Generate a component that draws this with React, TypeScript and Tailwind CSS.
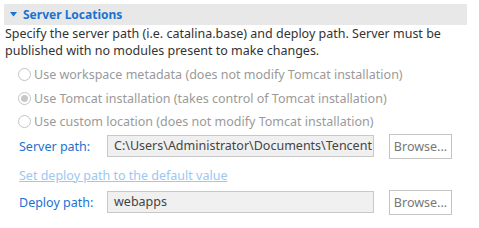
import React from "react";

const Radio = ({ checked, label }: { checked?: boolean; label: string }) => (
  <div className="flex h-[23.5px] items-center">
    <span className="flex h-[13px] w-[13px] items-center justify-center rounded-full border border-[#c4c4c4] bg-white">
      {checked && <span className="h-[7px] w-[7px] rounded-full bg-[#c8c8c8]" />}
    </span>
    <span className="ml-[3px] text-[#9a9a9a]">{label}</span>
  </div>
);

const PathRow = ({ label, value }: { label: string; value: string }) => (
  <div className="flex items-center">
    <span className="w-[88px] text-[#1a73d0]">{label}</span>
    <div className="h-[22px] w-[267px] overflow-hidden whitespace-nowrap border border-[#c8c8c8] bg-[#f0f0f0] pl-[6px] leading-[20px] text-[#444]">
      {value}
    </div>
    <button className="ml-[15px] h-[25px] w-[63px] border border-[#c4c4c4] bg-white text-[#777]">Browse...</button>
  </div>
);

export default function App() {
  return (
    <div className="h-[228px] w-[479px] bg-white pt-[4px] pl-[4px] text-[12.5px] leading-[17px] text-[#333] [font-family:'Noto_Sans',sans-serif]">
      <div className="flex h-[21px] w-[463px] items-center bg-[#e8e8e8] pl-[6px]">
        <svg width="7" height="5" viewBox="0 0 7 5" className="mr-[6px]">
          <path d="M0 0h7L3.5 4.5z" fill="#1a73d0" />
        </svg>
        <span className="text-[12px] font-bold text-[#1a73d0]">Server Locations</span>
      </div>
      <p className="pl-[1px]">
        Specify the server path (i.e. catalina.base) and deploy path. Server must be
        <br />
        published with no modules present to make changes.
      </p>
      <div className="mt-[4px] pl-[14px]">
        <Radio label="Use workspace metadata (does not modify Tomcat installation)" />
        <Radio checked label="Use Tomcat installation (takes control of Tomcat installation)" />
        <Radio label="Use custom location (does not modify Tomcat installation)" />
      </div>
      <div className="pl-[15px]">
        <PathRow label="Server path:" value="C:\Users\Administrator\Documents\Tencent Files" />
        <div className="mt-[8px] mb-[6px] text-[#9cc8f2] underline">Set deploy path to the default value</div>
        <PathRow label="Deploy path:" value="webapps" />
      </div>
    </div>
  );
}
